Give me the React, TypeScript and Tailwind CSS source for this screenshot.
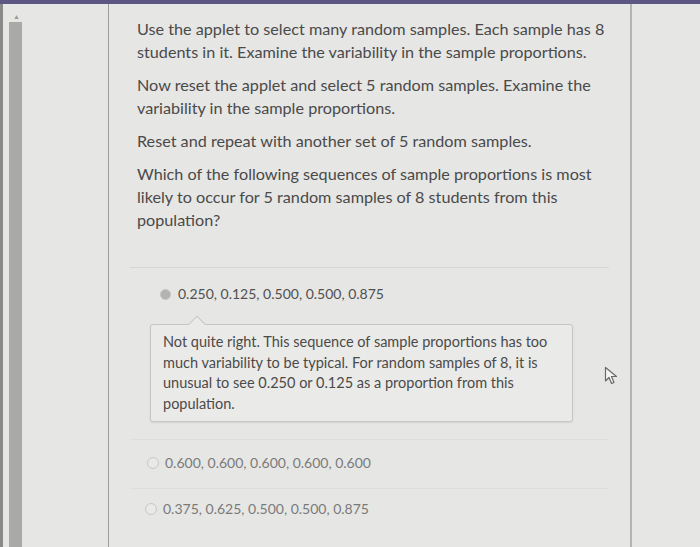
export default function App() {
  return (
    <div className="relative h-[547px] w-[700px] overflow-hidden bg-[#e6e6e4] font-['Lato','Liberation_Sans',sans-serif] text-[#4a4a4a]">
      <div className="h-[4px] bg-[#5b5683]" />
      <div className="flex h-[543px]">
        <div className="w-[3px] bg-[#8a8a88]" />
        {/* sidebar with scrollbar */}
        <div className="flex w-[105px] flex-col pl-[6px] pt-[8px]">
          <div className="ml-[4px] text-[7px] leading-[8px] text-[#9a9a9a]">▲</div>
          <div className="mt-[2px] h-full w-[13px] bg-[#a9a9a7]" />
        </div>
        <div className="w-px bg-[#9c9c9a]" />
        {/* main column */}
        <div className="flex w-[521px] flex-col">
          <div className="flex w-[500px] flex-col gap-[10px] pl-[28px] pt-[13px] text-[16.2px] leading-[23px]">
            <p>Use the applet to select many random samples. Each sample has 8 students in it. Examine the variability in the sample proportions.</p>
            <p>Now reset the applet and select 5 random samples. Examine the variability in the sample proportions.</p>
            <p>Reset and repeat with another set of 5 random samples.</p>
            <p>Which of the following sequences of sample proportions is most likely to occur for 5 random samples of 8 students from this population?</p>
          </div>
          <div className="mx-[21px] mt-[36px] h-px bg-[#d6d6d4]" />
          <div className="flex items-center gap-[7px] pl-[51px] pt-[16px] text-[14px] leading-[20px] text-[#505050]">
            <span className="h-[11px] w-[11px] rounded-full border border-[#c4c4c2] bg-[#b3b3b1]" />
            <span>0.250, 0.125, 0.500, 0.500, 0.875</span>
          </div>
          <div className="relative ml-[41px] mt-[20px] w-[423px] rounded-[3px] border border-[#c6c6c4] bg-[#eaeae8] px-[12px] py-[7px] text-[14.5px] leading-[20.5px] text-[#4a4a4a] shadow-[0_1px_2px_rgba(0,0,0,0.08)]">
            <div className="absolute -top-[7px] left-[40px] h-[12px] w-[12px] rotate-45 border-l border-t border-[#c6c6c4] bg-[#eaeae8]" />
            <p className="relative">Not quite right. This sequence of sample proportions has too much variability to be typical. For random samples of 8, it is unusual to see 0.250 or 0.125 as a proportion from this population.</p>
          </div>
          <div className="mx-[21px] mt-[17px] h-px bg-[#dededc]" />
          <div className="flex items-center gap-[6px] pl-[38px] pt-[13px] text-[14px] leading-[20px] text-[#7a7a7a]">
            <span className="h-[12px] w-[12px] rounded-full border border-[#c8c8c6] bg-[#e9e9e7]" />
            <span>0.600, 0.600, 0.600, 0.600, 0.600</span>
          </div>
          <div className="mx-[21px] mt-[15px] h-px bg-[#dededc]" />
          <div className="flex items-center gap-[6px] pl-[36px] pt-[10px] text-[14px] leading-[20px] text-[#7a7a7a]">
            <span className="h-[12px] w-[12px] rounded-full border border-[#c8c8c6] bg-[#e9e9e7]" />
            <span>0.375, 0.625, 0.500, 0.500, 0.875</span>
          </div>
        </div>
        <div className="w-[2px] bg-[#b4b4b2]" />
        <div className="flex-1" />
      </div>
      {/* mouse cursor */}
      <svg className="absolute left-[604px] top-[366px]" width="16" height="20" viewBox="0 0 16 20">
        <path d="M1.5 1.5 L1.5 15 L5 11.5 L7.5 17.5 L10 16.5 L7.5 10.5 L12.5 10.5 Z" fill="#f4f4f2" stroke="#6a6a6a" strokeWidth="1.2" strokeLinejoin="round" />
      </svg>
    </div>
  );
}
